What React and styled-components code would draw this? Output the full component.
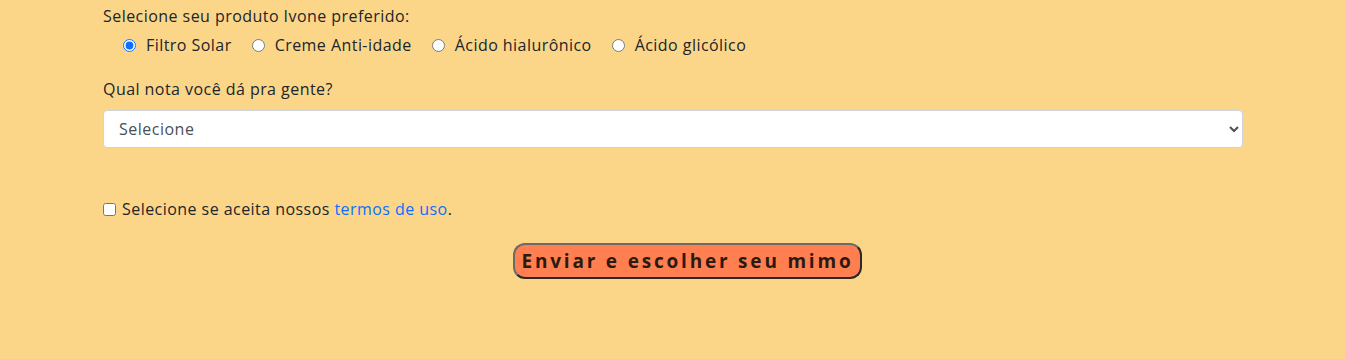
import styled, { createGlobalStyle } from 'styled-components';

const GlobalStyle = createGlobalStyle`
  html, body {
    margin: 0;
    padding: 0;
    background: #fbd689;
  }
  body {
    font-family: "Open Sans", "Liberation Sans", sans-serif;
    font-size: 16px;
    letter-spacing: 0.45px;
    color: #212529;
  }
`;

const Page = styled.div`
  min-height: 359px;
  background: #fbd689;
`;

const Form = styled.form`
  width: 1140px;
  margin: 0 auto;
  padding-top: 5px;
  padding-left: 1px;
`;

const Label = styled.p`
  margin: 0 0 3px;
  line-height: 22px;
`;

const RadioRow = styled.div`
  display: flex;
  align-items: center;
  gap: 20px;
  padding-left: 20px;
  height: 30px;
`;

const Option = styled.label`
  display: flex;
  align-items: center;
  gap: 10px;
`;

const Radio = styled.input.attrs({ type: 'radio', name: 'produto' })`
  width: 13px;
  height: 13px;
  margin: 0;
  accent-color: #0d6efd;
`;

const Field = styled.div`
  margin-top: 18px;
`;

const Select = styled.select`
  display: block;
  width: 1140px;
  height: 38px;
  margin-top: 10px;
  padding: 0 12px 0 11px;
  border: 1px solid #ced4da;
  border-radius: 4px;
  background: #fff;
  font: inherit;
  letter-spacing: 0.5px;
  font-size: 16px;
  color: #495057;
`;

const Terms = styled.label`
  display: block;
  margin-top: 50px;
  line-height: 22px;
`;

const Check = styled.input.attrs({ type: 'checkbox' })`
  width: 13px;
  height: 13px;
  margin: 0 6px 0 0;
  vertical-align: -1px;
`;

const Link = styled.a`
  color: #0d6efd;
  text-decoration: none;
`;

const Actions = styled.div`
  display: flex;
  justify-content: center;
  margin-top: 23px;
  padding-left: 29px;
`;

const Submit = styled.button`
  background: #ff7f50;
  border: 2px solid;
  border-color: #6b6b6b #2a2a2a #2a2a2a #6b6b6b;
  border-radius: 12px;
  padding: 3px 7px;
  font-family: inherit;
  font-size: 19px;
  font-weight: 700;
  letter-spacing: 2.8px;
  color: #2b1a10;
  cursor: pointer;
`;

export default function App() {
  return (
    <Page>
      <GlobalStyle />
      <Form>
        <Label>Selecione seu produto Ivone preferido:</Label>
        <RadioRow>
          <Option><Radio defaultChecked /> Filtro Solar</Option>
          <Option><Radio /> Creme Anti-idade</Option>
          <Option><Radio /> Ácido hialurônico</Option>
          <Option><Radio /> Ácido glicólico</Option>
        </RadioRow>
        <Field>
          <Label>Qual nota você dá pra gente?</Label>
          <Select defaultValue="">
            <option value="">Selecione</option>
            <option>1</option>
            <option>2</option>
            <option>3</option>
            <option>4</option>
            <option>5</option>
          </Select>
        </Field>
        <Terms>
          <Check />Selecione se aceita nossos <Link href="#">termos de uso</Link>.
        </Terms>
        <Actions>
          <Submit type="button">Enviar e escolher seu mimo</Submit>
        </Actions>
      </Form>
    </Page>
  );
}
